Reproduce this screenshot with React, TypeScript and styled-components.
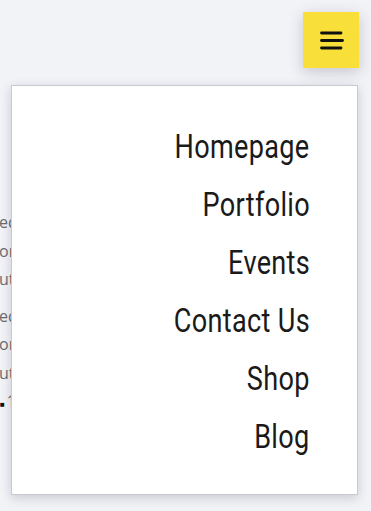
import React from "react";
import styled, { createGlobalStyle } from "styled-components";

const Global = createGlobalStyle`
  html, body { margin: 0; padding: 0; background: #f2f3f7; }
  body { font-family: "Open Sans", "Liberation Sans", sans-serif; overflow: hidden; }
  #root { position: relative; width: 371px; height: 511px; }
`;

const Page = styled.div`
  position: relative;
  width: 371px;
  height: 511px;
  background: #f2f3f7;
  overflow: hidden;
`;

const Header = styled.header`
  display: flex;
  justify-content: flex-end;
  padding: 12px 12px 0 0;
`;

const MenuButton = styled.button`
  width: 56px;
  height: 56px;
  border: none;
  padding: 0;
  background: #f8df3a;
  box-shadow: 0 4px 14px rgba(40, 40, 70, 0.22);
  display: flex;
  align-items: center;
  justify-content: center;
  cursor: pointer;
`;

const Content = styled.div`
  padding-top: 140px;
  margin-left: -1px;
  display: flex;
  flex-direction: column;
  gap: 8px;
`;

const Para = styled.p`
  margin: 0;
  font-size: 16px;
  line-height: 28.5px;
  color: #6a6a6e;
  white-space: pre-line;
`;

const Bullet = styled.span`
  color: #111;
  font-size: 8px;
  margin-left: 1px;
  margin-right: 2px;
`;

const Panel = styled.nav`
  position: absolute;
  top: 85px;
  left: 11px;
  width: 345px;
  height: 408px;
  background: #fff;
  border: 1px solid #c9c9ce;
  box-shadow: 0 3px 10px rgba(40, 40, 60, 0.2);
`;

const List = styled.ul`
  list-style: none;
  margin: 0;
  padding: 32px 47px 0 0;
  display: flex;
  flex-direction: column;
  align-items: flex-end;
`;

const Item = styled.li`
  font-family: Roboto, "Liberation Sans", sans-serif;
  font-size: 33px;
  font-weight: 400;
  line-height: 58px;
  letter-spacing: 0.4px;
  color: #1a1a1a;
  transform: scaleX(0.82);
  transform-origin: right center;
  white-space: nowrap;
`;

const items = ["Homepage", "Portfolio", "Events", "Contact Us", "Shop", "Blog"];

export default function App() {
  return (
    <Page>
      <Global />
      <Header>
        <MenuButton aria-label="Menu">
          <svg width="26" height="20" viewBox="0 0 26 20">
            <g stroke="#111" strokeWidth="2.8" strokeLinecap="round">
              <line x1="3.5" y1="3" x2="23" y2="3" />
              <line x1="3.5" y1="10.5" x2="24.5" y2="10.5" />
              <line x1="3.5" y1="18" x2="23" y2="18" />
            </g>
          </svg>
        </MenuButton>
      </Header>
      <Content>
        <Para>{"ed do eiusmod tempor\nor incididunt ut labore\nut enim ad minim"}</Para>
        <Para>
          {"ed quia consequuntur\nor sit amet consectetur\nut aliquam quaerat\n"}
          <Bullet>■</Bullet>1
        </Para>
      </Content>
      <Panel>
        <List>
          {items.map((t) => (
            <Item key={t}>{t}</Item>
          ))}
        </List>
      </Panel>
    </Page>
  );
}
